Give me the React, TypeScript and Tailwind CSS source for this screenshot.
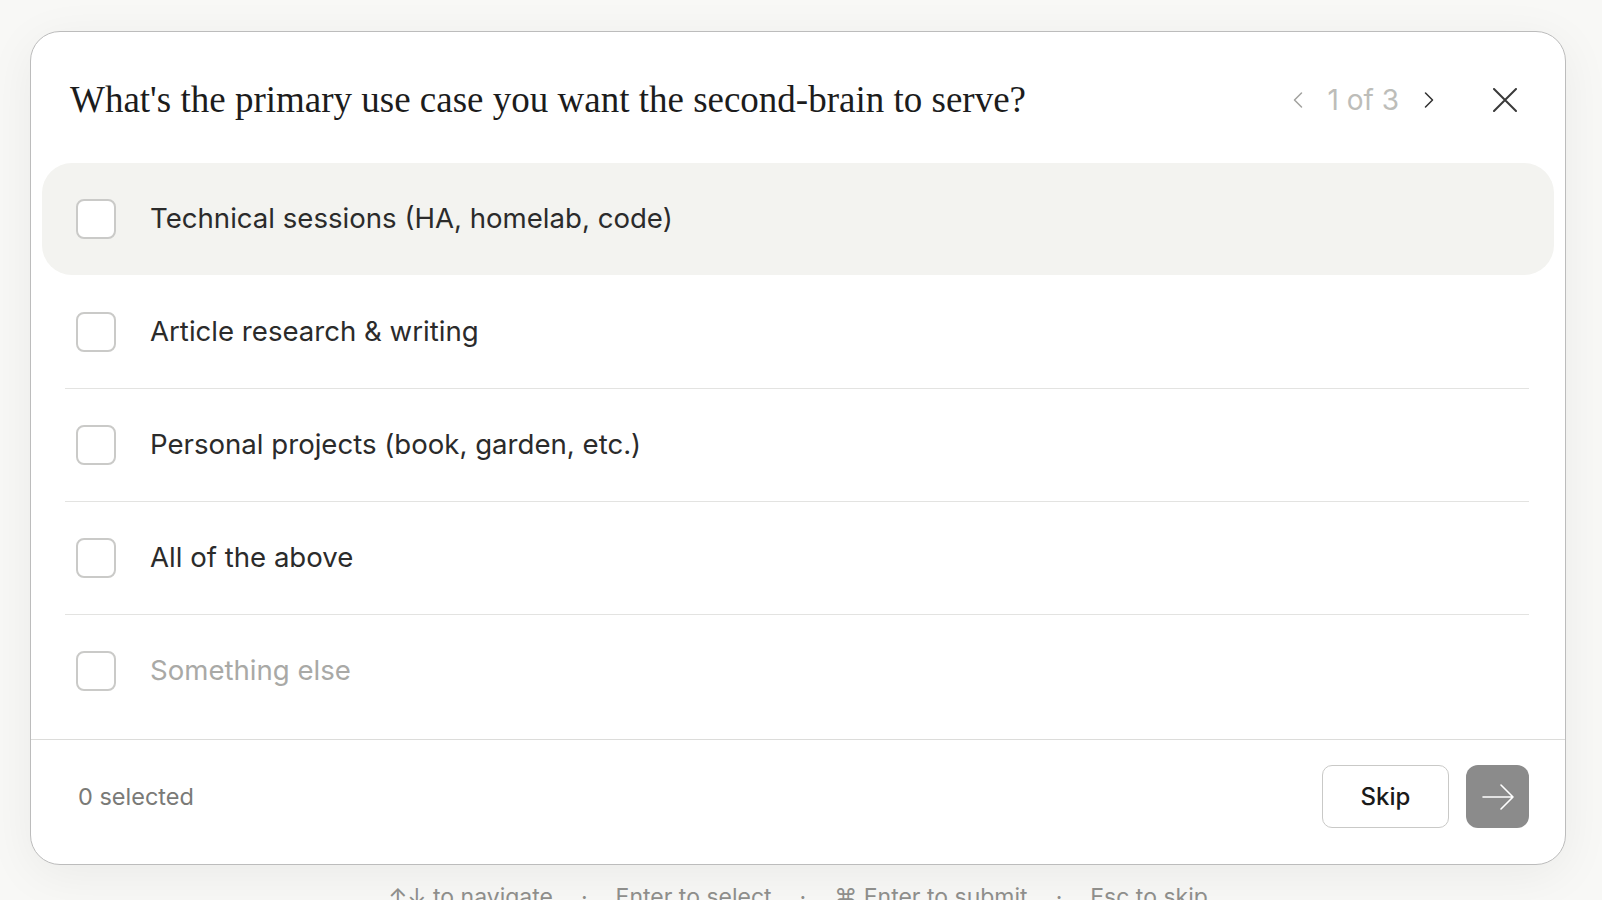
const options = [
  { label: "Technical sessions (HA, homelab, code)", active: true },
  { label: "Article research & writing" },
  { label: "Personal projects (book, garden, etc.)" },
  { label: "All of the above" },
  { label: "Something else", placeholder: true },
];

const sans = "font-['Inter','Liberation_Sans',sans-serif]";

function Chevron({ dir, className }: { dir: "left" | "right"; className: string }) {
  return (
    <svg viewBox="0 0 24 24" fill="none" stroke="currentColor" strokeWidth={1.3} strokeLinecap="round" strokeLinejoin="round" className={className}>
      {dir === "left" ? <path d="M15 6 9 12l6 6" /> : <path d="m9 6 6 6-6 6" />}
    </svg>
  );
}

function OptionRow({
  label,
  active,
  placeholder,
  divider,
}: {
  label: string;
  active?: boolean;
  placeholder?: boolean;
  divider: boolean;
}) {
  return (
    <>
      <div
        className={`flex h-[112px] items-center rounded-[30px] pl-[34px] ${
          active ? "bg-[#f3f3f0]" : ""
        }`}
      >
        <span className="h-[40px] w-[40px] shrink-0 rounded-[8px] border-2 border-[#cacac8] bg-white" />
        <span
          className={`ml-[34px] text-[27.6px] ${
            placeholder ? "text-[#a9a9a6]" : "text-[#2b2b2b]"
          }`}
        >
          {label}
        </span>
      </div>
      {divider && (
        <div
          className={`ml-[23px] mr-[25px] h-px ${
            active ? "bg-transparent" : "bg-[#e3e3e1]"
          }`}
        />
      )}
    </>
  );
}

export default function App() {
  return (
    <div className={`h-[900px] overflow-hidden bg-[#f8f8f6] pl-[30px] pr-[36px] pt-[31px] ${sans}`}>
      <div className="w-[1536px] rounded-[30px] border border-[#bcbcbc] bg-white shadow-[0_10px_50px_rgba(0,0,0,0.06)]">
        <header className="flex h-[131px] items-start justify-between pl-[39px] pr-[36px] pt-[48px]">
          <h1 className="font-['Liberation_Serif',serif] text-[37px] leading-[40px] text-[#1c1c1c]">
            What's the primary use case you want the second-brain to serve?
          </h1>
          <div className="flex h-[40px] items-center">
            <Chevron dir="left" className="h-[28px] w-[28px] text-[#a3a3a0]" />
            <span className="ml-[15px] text-[28px] text-[#bdbdb9]">1 of 3</span>
            <Chevron dir="right" className="ml-[16px] h-[28px] w-[28px] text-[#333]" />
            <svg viewBox="0 0 24 24" fill="none" stroke="currentColor" strokeWidth={2} strokeLinecap="round" className="ml-[38px] h-[48px] w-[48px] p-[12px] text-[#3a3a3a]">
              <path d="M1 1l22 22M23 1 1 23" />
            </svg>
          </div>
        </header>

        <div className="px-[11px] pb-[12px]">
          {options.map((o, i) => (
            <OptionRow
              key={o.label}
              label={o.label}
              active={o.active}
              placeholder={o.placeholder}
              divider={i < options.length - 1}
            />
          ))}
        </div>

        <footer className="flex items-center justify-between border-t border-[#dcdcda] pb-[36px] pl-[47px] pr-[36px] pt-[25px]">
          <span className="text-[23.5px] text-[#7a7a77]">0 selected</span>
          <div className="flex gap-[17px]">
            <button
              type="button"
              className="flex h-[63px] w-[127px] items-center justify-center rounded-[10px] border border-[#c9c9c7] bg-white text-[24px] font-medium text-[#1a1a1a]"
            >
              Skip
            </button>
            <button
              type="button"
              className="flex h-[63px] w-[63px] items-center justify-center rounded-[12px] bg-[#8b8b8b]"
            >
              <svg viewBox="0 0 32 28" fill="none" stroke="white" strokeWidth={1.6} strokeLinecap="round" strokeLinejoin="round" className="h-[28px] w-[32px]">
                <path d="M1 14h30M19 2l12 12-12 12" />
              </svg>
            </button>
          </div>
        </footer>
      </div>

      <div className="mt-[15px] flex w-[1536px] items-center justify-center gap-[28px] text-[23px] text-[#8e8e8b]">
        <span>↑↓ to navigate</span>
        <span>·</span>
        <span>Enter to select</span>
        <span>·</span>
        <span>⌘ Enter to submit</span>
        <span>·</span>
        <span>Esc to skip</span>
      </div>
    </div>
  );
}
